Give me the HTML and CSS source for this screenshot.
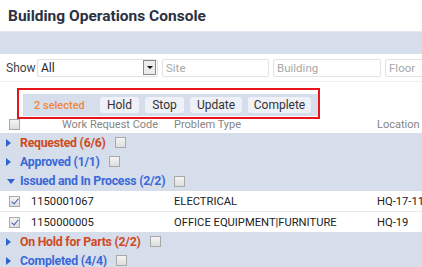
FILE: index.html
```html
<!DOCTYPE html>
<html lang="en">

<head>
<title>Building Operations Console</title>
<meta charset="UTF-8">
<meta name="viewport" content="width=device-width, initial-scale=1.0">
<link rel="stylesheet" href="styles.css">
</head>

<body>
<h1 class="title">Building Operations Console</h1>
<div class="band"></div>

<div class="filters">
<label class="show">Show</label>
<div class="select"><span>All</span><span class="arrow"></span></div>
<input type="text" class="site" placeholder="Site">
<input type="text" class="building" placeholder="Building">
<input type="text" class="floor" placeholder="Floor">
</div>

<div class="actions">
<span class="count">2 selected</span>
<button class="hold">Hold</button>
<button class="stop">Stop</button>
<button class="update">Update</button>
<button class="complete">Complete</button>
<div class="mark"></div>
</div>

<div class="head row">
<span class="cb"></span>
<span class="code">Work Request Code</span>
<span class="prob">Problem Type</span>
<span class="loc">Location</span>
</div>

<div class="group red"><span class="tri"></span><span class="name">Requested (6/6)</span><span class="cb"></span></div>
<div class="group blue"><span class="tri"></span><span class="name">Approved (1/1)</span><span class="cb"></span></div>
<div class="group blue open"><span class="tri"></span><span class="name">Issued and In Process (2/2)</span><span class="cb"></span></div>
<div class="item row">
<span class="cb on"></span>
<span class="code">1150001067</span>
<span class="prob">ELECTRICAL</span>
<span class="loc">HQ-17-11</span>
</div>
<div class="item row">
<span class="cb on"></span>
<span class="code">1150000005</span>
<span class="prob">OFFICE EQUIPMENT|FURNITURE</span>
<span class="loc">HQ-19</span>
</div>
<div class="group red"><span class="tri"></span><span class="name">On Hold for Parts (2/2)</span><span class="cb"></span></div>
<div class="group blue"><span class="tri"></span><span class="name">Completed (4/4)</span><span class="cb"></span></div>
</body>
</html>
```

FILE: styles.css
```css
body {
    margin: 0;
    font-family: Roboto, "Liberation Sans", sans-serif;
    font-size: 12px;
    color: #333;
    background: #fff;
    overflow: hidden;
}
h1.title {
    margin: 0;
    height: 31px;
    padding-left: 8px;
    font-size: 15.5px;
    font-weight: bold;
    line-height: 32px;
    color: #2b3142;
}
.band {
    height: 23px;
    background: #d6ddeb;
    border-top: 1px solid #e3e7f0;
    box-sizing: border-box;
}
.filters {
    display: flex;
    align-items: center;
    height: 28px;
    padding-left: 6px;
    border-bottom: 1px solid #eef0f3;
    box-sizing: border-box;
    white-space: nowrap;
}
.filters > * {
    flex: none;
}
.show {
    width: 31px;
    font-size: 12px;
    color: #444;
}
.select {
    display: flex;
    align-items: center;
    justify-content: space-between;
    box-sizing: border-box;
    width: 121px;
    height: 18px;
    padding: 0 1px 0 3px;
    border: 1px solid #e0e0e0;
    border-radius: 2px;
    font-size: 12px;
    color: #222;
}
.arrow {
    position: relative;
    width: 11px;
    height: 13px;
    border: 1px solid #8a8a8a;
    background: #ececec;
}
.arrow::after {
    content: "";
    position: absolute;
    left: 3px;
    top: 5px;
    border-left: 3px solid transparent;
    border-right: 3px solid transparent;
    border-top: 3px solid #111;
}
input[type=text] {
    box-sizing: border-box;
    height: 18px;
    margin: 0 0 0 4px;
    padding: 0 3px;
    border: 1px solid #e4e4e4;
    border-radius: 2px;
    font-family: Roboto, "Liberation Sans", sans-serif;
    font-size: 11.5px;
    outline: none;
}
input::placeholder {
    color: #a8a8a8;
}
input.site {
    width: 107px;
}
input.building {
    width: 108px;
}
input.floor {
    width: 60px;
}
.actions {
    position: relative;
    display: flex;
    align-items: center;
    gap: 6px;
    width: 297px;
    height: 22px;
    margin: 12px 0 0 23px;
    padding-left: 11px;
    box-sizing: border-box;
    background: #d6ddeb;
}
.count {
    width: 60px;
    font-size: 11px;
    font-weight: 500;
    color: #f0873a;
}
.actions button {
    flex: none;
    height: 16px;
    padding: 0;
    border: none;
    border-radius: 3px;
    background: #eef1f8;
    font-family: Roboto, "Liberation Sans", sans-serif;
    font-size: 12px;
    color: #333;
}
button.hold {
    width: 39px;
}
button.stop {
    width: 39px;
}
button.update {
    width: 52px;
}
button.complete {
    width: 63px;
}
.mark {
    position: absolute;
    left: -6px;
    top: -6px;
    width: 299px;
    height: 27px;
    border: 2px solid #e8141b;
    pointer-events: none;
}
.row {
    display: flex;
    align-items: center;
    white-space: nowrap;
}
.row > * {
    flex: none;
}
.row .cb {
    margin-left: 9px;
}
.row .code {
    margin-left: 11px;
    width: 143px;
}
.row .prob {
    width: 203px;
}
.head {
    height: 17px;
    font-size: 11px;
    color: #858585;
}
.head .code {
    padding-left: 31px;
    width: 112px;
}
.item {
    height: 20px;
    background: #fff;
    font-size: 11.2px;
    color: #222;
}
.item + .item {
    border-top: 1px solid #e7e9ee;
}
.cb {
    display: inline-block;
    position: relative;
    box-sizing: border-box;
    width: 11px;
    height: 11px;
    border: 1px solid #a9a9a9;
    background: linear-gradient(#f4f4f4, #dedede);
    flex: none;
}
.cb.on::after {
    content: "";
    position: absolute;
    left: 3px;
    top: 0;
    width: 3px;
    height: 6px;
    border-right: 1.5px solid #3d5fb8;
    border-bottom: 1.5px solid #3d5fb8;
    transform: rotate(40deg);
}
.group {
    display: flex;
    align-items: center;
    height: 19px;
    background: #d6ddeb;
    font-weight: bold;
    font-size: 12.3px;
    letter-spacing: -0.25px;
    white-space: nowrap;
}
.group .name {
    margin-right: 9px;
}
.group.red {
    color: #cf4a1d;
}
.group.blue {
    color: #3a6ad8;
}
.tri {
    width: 0;
    height: 0;
    margin: 0 9px 0 6px;
    border-top: 4px solid transparent;
    border-bottom: 4px solid transparent;
    border-left: 5px solid #2f63d4;
}
.group.open .tri {
    margin: 0 5px 0 7px;
    border-left: 4px solid transparent;
    border-right: 4px solid transparent;
    border-top: 5px solid #2f63d4;
    border-bottom: none;
}
.group.open {
    height: 20px;
}
```
